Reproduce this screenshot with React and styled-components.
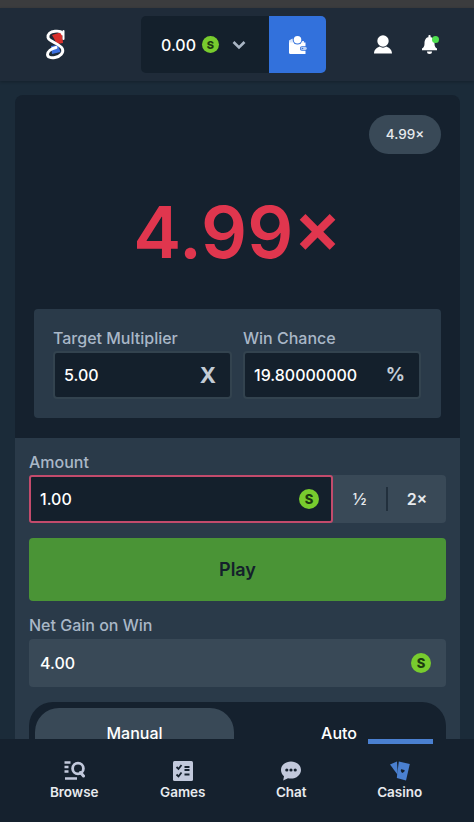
import React from "react";
import styled, { createGlobalStyle } from "styled-components";

const Global = createGlobalStyle`
  html, body { margin: 0; padding: 0; background: #1b2b39; }
  * { box-sizing: border-box; }
  body { font-family: Inter, "Open Sans", "Liberation Sans", sans-serif; overflow: hidden; }
`;

const Page = styled.div`
  position: relative;
  width: 474px;
  height: 822px;
  overflow: hidden;
  background: #1b2b39;
  display: flex;
  flex-direction: column;
`;
const BrowserStrip = styled.div`
  height: 8px;
  flex: none;
  background: #3b3c3e;
`;
const Header = styled.header`
  height: 73px;
  flex: none;
  background: #1f2b39;
  box-shadow: 0 1px 3px rgba(0,0,0,.25);
  display: flex;
  align-items: center;
  padding: 0 34px 0 43px;
`;
const Logo = styled.svg`
  width: 24px;
  height: 34px;
  flex: none;
`;
const Wallet = styled.div`
  margin-left: 74px;
  width: 185px;
  height: 57px;
  display: flex;
  border-radius: 5px;
  overflow: hidden;
`;
const Balance = styled.div`
  width: 128px;
  background: #14202c;
  display: flex;
  align-items: center;
  padding-left: 20px;
  color: #fff;
  font-size: 16px;
  font-weight: 500;
`;
const Chevron = styled.svg`
  width: 16px;
  height: 16px;
  margin-left: 12px;
`;
const WalletButton = styled.div`
  flex: 1;
  background: #3271dc;
  display: flex;
  align-items: center;
  justify-content: center;
`;
const HeaderIcons = styled.div`
  margin-left: auto;
  display: flex;
  align-items: center;
  gap: 27px;
`;
const Main = styled.main`
  flex: 1;
  padding: 14px 14px 0 15px;
  display: flex;
  flex-direction: column;
`;
const Board = styled.section`
  height: 343px;
  flex: none;
  background: #15212e;
  border-radius: 8px 8px 0 0;
  padding: 20px 19px 20px 19px;
  display: flex;
  flex-direction: column;
`;
const Pill = styled.div`
  align-self: flex-end;
  width: 72px;
  height: 39px;
  border-radius: 20px;
  background: #394957;
  color: #e6e9ed;
  font-size: 13.5px;
  font-weight: 500;
  display: flex;
  align-items: center;
  justify-content: center;
`;
const Result = styled.div`
  height: 155px;
  flex: none;
  color: #e0364e;
  font-size: 72px;
  font-weight: 600;
  display: flex;
  align-items: center;
  justify-content: center;
`;
const SettingsCard = styled.div`
  height: 110px;
  background: #2a3a49;
  border-radius: 4px;
  padding: 20px 20px 0 19px;
  display: grid;
  grid-template-columns: 179px 178px;
  column-gap: 11px;
  align-items: start;
`;
const Field = styled.div`
  display: flex;
  flex-direction: column;
`;
const Label = styled.label`
  color: #a9b7c7;
  font-size: 16px;
  font-weight: 500;
  line-height: 19px;
  margin-bottom: ${p => p.$gap ?? 3}px;
`;
const DarkInput = styled.div`
  height: 48px;
  background: #14202c;
  border: 2px solid #33434f;
  border-radius: 4px;
  display: flex;
  align-items: center;
  justify-content: space-between;
  padding: 0 14px 0 9px;
  color: #fff;
  font-size: 16px;
  font-weight: 500;
`;
const Suffix = styled.span`
  color: #c3ccd6;
  font-size: ${p => p.$size ?? 22}px;
  font-weight: 700;
`;
const Controls = styled.section`
  flex: 1;
  background: #2a3a49;
  padding: 15px 14px 0 14px;
  display: flex;
  flex-direction: column;
`;
const AmountRow = styled.div`
  display: flex;
  height: 48px;
  background: #394957;
  border-radius: 4px;
`;
const AmountInput = styled.div`
  width: 304px;
  flex: none;
  background: #14202c;
  border: 2px solid #c34b6c;
  border-radius: 3px;
  display: flex;
  align-items: center;
  justify-content: space-between;
  padding: 0 12px 0 9px;
  color: #fff;
  font-size: 16px;
  font-weight: 500;
`;
const HalfDouble = styled.div`
  flex: 1;
  display: flex;
  align-items: center;
  color: #e6e9ed;
`;
const MiniHalf = styled.div`
  width: 53px;
  text-align: center;
  font-size: 16px;
  font-weight: 500;
`;
const MiniDouble = styled.div`
  flex: 1;
  text-align: center;
  font-size: 16px;
  font-weight: 600;
`;
const Divider = styled.div`
  width: 2px;
  height: 24px;
  background: #22303d;
`;
const PlayButton = styled.div`
  height: 63px;
  margin-top: 15px;
  background: #4a9436;
  border-radius: 4px;
  display: flex;
  align-items: center;
  justify-content: center;
  color: #14202c;
  font-size: 18px;
  font-weight: 600;
`;
const GainField = styled(Field)`
  margin-top: 15px;
`;
const GainInput = styled.div`
  height: 48px;
  background: #394957;
  border-radius: 4px;
  display: flex;
  align-items: center;
  justify-content: space-between;
  padding: 0 15px 0 11px;
  color: #fff;
  font-size: 16px;
  font-weight: 500;
`;
const Tabs = styled.div`
  height: 70px;
  margin-top: 15px;
  background: #15212e;
  border-radius: 24px 24px 0 0;
  padding: 6px;
  display: grid;
  grid-template-columns: 199px 1fr;
  column-gap: 4px;
`;
const Tab = styled.div`
  background: ${p => (p.$active ? "#394957" : "transparent")};
  border-radius: 24px 24px 0 0;
  color: #fff;
  font-size: 16px;
  font-weight: 500;
  text-align: center;
  padding-top: 15px;
`;
const Nav = styled.nav`
  position: absolute;
  left: 0;
  right: 0;
  bottom: 0;
  height: 83px;
  background: #15212e;
  display: grid;
  grid-template-columns: repeat(4, 1fr);
  padding: 0 20px;
`;
const NavItem = styled.div`
  position: relative;
  display: flex;
  flex-direction: column;
  align-items: center;
  padding-top: 21px;
  color: #e8ebef;
  font-size: 13.5px;
  font-weight: 600;
  line-height: 17px;
`;
const NavIcon = styled.svg`
  width: 22px;
  height: 22px;
  margin-bottom: 2px;
`;
const ActiveBar = styled.div`
  position: absolute;
  top: 0;
  left: 50%;
  margin-left: -32px;
  width: 65px;
  height: 5px;
  background: #4a80d0;
`;
const CoinBadge = styled.span`
  width: ${p => p.$size ?? 20}px;
  height: ${p => p.$size ?? 20}px;
  border-radius: 50%;
  background: #78cc2e;
  color: #1c3a10;
  display: inline-flex;
  align-items: center;
  justify-content: center;
  font-size: ${p => (p.$size ? 11 : 13)}px;
  font-weight: 800;
  flex: none;
`;
const BalanceValue = styled.span`
  margin-right: 6px;
`;
const SoloIcon = styled.svg`
  display: block;
`;
const BellWrap = styled.div`
  position: relative;
  width: 20px;
  height: 22px;
`;
const GreenDot = styled.span`
  position: absolute;
  top: 2px;
  right: 1px;
  width: 7px;
  height: 7px;
  background: #4fe04f;
  border-radius: 50%;
`;

export default function App() {
  return (
    <Page>
      <Global />
      <BrowserStrip />
      <Header>
        <Logo viewBox="0 0 24 34">
          <path d="M9 7 L19 4 L20 15 L14 16Z" fill="#d8302c" />
          <path d="M8 18 L15 17 L17.5 24 L9 26Z" fill="#3c70e0" />
          <path d="M19.5 6C19.5 3.6 16.5 2.8 12 3.2 7 3.7 4.5 6 5 9.5c.5 4 12.5 6.5 14.5 11.5 1.3 3.6-2 7.6-7.5 8.5-4.5.7-7.5-.4-7.5-3 0-3 3.5-6 8.5-7" fill="none" stroke="#fff" strokeWidth="2.9" strokeLinecap="round" />
          <path d="M20.5 3v8" stroke="#fff" strokeWidth="2" strokeLinecap="round" />
        </Logo>
        <Wallet>
          <Balance>
            <BalanceValue>0.00</BalanceValue>
            <CoinBadge $size={17}>S</CoinBadge>
            <Chevron viewBox="0 0 16 16">
              <path d="M2.5 5 L8 10.5 L13.5 5" fill="none" stroke="#a9b5c4" strokeWidth="2.6" />
            </Chevron>
          </Balance>
          <WalletButton>
            <SoloIcon width="20" height="20" viewBox="0 0 20 20">
              <path d="M1 5.5 L4.5 3.6 L5.5 6 H16 V8 H1Z" fill="#dbe7fb" />
              <path d="M1 7.5 H17.5 V19 H2.5 A1.5 1.5 0 0 1 1 17.5Z" fill="#fff" />
              <circle cx="9.5" cy="4.8" r="4.8" fill="#3271dc" />
              <circle cx="9.5" cy="4.8" r="3.8" fill="#fff" />
              <rect x="12" y="11.2" width="7.5" height="4.6" rx="1.8" fill="#3271dc" />
              <rect x="12.8" y="12" width="6" height="3" rx="1.4" fill="#b9d0f5" />
              <circle cx="14.5" cy="13.5" r="0.8" fill="#3271dc" />
            </SoloIcon>
          </WalletButton>
        </Wallet>
        <HeaderIcons>
          <SoloIcon width="20" height="20" viewBox="0 0 20 20">
            <circle cx="10" cy="6" r="5.7" fill="#fff" />
            <path d="M1 18.5 C1 14 5 12 7 11.5 C8 13 12 13 13 11.5 C15 12 19 14 19 18.5Z" fill="#fff" />
          </SoloIcon>
          <BellWrap>
            <SoloIcon width="20" height="22" viewBox="0 0 20 22">
              <path d="M9.5 3 C5.5 3 4.5 6.5 4.5 9.5 C4.5 12 3.8 13.5 2 14.5 V16.3 H17 V14.5 C15.2 13.5 14.5 12 14.5 9.5 C14.5 6.5 13.5 3 9.5 3Z" fill="#fff" />
              <path d="M7 17.5 H12 A2.5 2.5 0 0 1 7 17.5Z" fill="#fff" />
              <rect x="8.4" y="1" width="2.2" height="3" rx="1" fill="#fff" />
            </SoloIcon>
            <GreenDot />
          </BellWrap>
        </HeaderIcons>
      </Header>
      <Main>
        <Board>
          <Pill>4.99×</Pill>
          <Result>4.99×</Result>
          <SettingsCard>
            <Field>
              <Label>Target Multiplier</Label>
              <DarkInput>
                5.00
                <Suffix>X</Suffix>
              </DarkInput>
            </Field>
            <Field>
              <Label>Win Chance</Label>
              <DarkInput>
                19.80000000
                <Suffix $size={19}>%</Suffix>
              </DarkInput>
            </Field>
          </SettingsCard>
        </Board>
        <Controls>
          <Label $gap={3}>Amount</Label>
          <AmountRow>
            <AmountInput>
              1.00
              <CoinBadge>S</CoinBadge>
            </AmountInput>
            <HalfDouble>
              <MiniHalf>½</MiniHalf>
              <Divider />
              <MiniDouble>2×</MiniDouble>
            </HalfDouble>
          </AmountRow>
          <PlayButton>Play</PlayButton>
          <GainField>
            <Label $gap={4}>Net Gain on Win</Label>
            <GainInput>
              4.00
              <CoinBadge>S</CoinBadge>
            </GainInput>
          </GainField>
          <Tabs>
            <Tab $active>Manual</Tab>
            <Tab>Auto</Tab>
          </Tabs>
        </Controls>
      </Main>
      <Nav>
        <NavItem>
          <NavIcon viewBox="0 0 22 22">
            <path d="M1.5 2.5h6M1.5 7h4M1.5 11.5h4M2 18.5h12" stroke="#c2c9dc" strokeWidth="2.6" fill="none" />
            <circle cx="15" cy="8.5" r="5.4" fill="none" stroke="#c2c9dc" strokeWidth="2.8" />
            <path d="M17.5 12.5 L20.5 16" stroke="#c2c9dc" strokeWidth="3" strokeLinecap="round" />
          </NavIcon>
          Browse
        </NavItem>
        <NavItem>
          <NavIcon viewBox="0 0 22 22">
            <rect x="1" y="1" width="20" height="20" rx="1.5" fill="#c2c9dc" />
            <path d="M4.5 7 L6.5 9 L9.5 5M4.5 14.5 L6.5 16.5 L9.5 12.5" stroke="#15212e" strokeWidth="1.8" fill="none" />
            <path d="M12.5 7h5M12.5 10h5M12.5 14.5h5" stroke="#15212e" strokeWidth="1.8" fill="none" />
          </NavIcon>
          Games
        </NavItem>
        <NavItem>
          <NavIcon viewBox="0 0 22 22">
            <path d="M11 1.5C5.5 1.5 1 5.2 1 10c0 2.5 1.2 4.6 3 6.2L3.2 20.5 8 18.2c1 .3 2 .4 3 .4 5.5 0 10-3.8 10-8.6S16.5 1.5 11 1.5Z" fill="#c2c9dc" />
            <circle cx="6.8" cy="10" r="1.6" fill="#15212e" />
            <circle cx="11" cy="10" r="1.6" fill="#15212e" />
            <circle cx="15.2" cy="10" r="1.6" fill="#15212e" />
          </NavIcon>
          Chat
        </NavItem>
        <NavItem>
          <ActiveBar />
          <NavIcon viewBox="0 0 22 22">
            <path d="M1 4.5 L8 1.5 L8.8 15 Z" fill="#4a80d0" />
            <path d="M9.8 1.5 L20.8 4 L17 20.5 L7.8 18 Z" fill="#4a80d0" />
            <path d="M12 9.5 c1-.8 1.8 0 2 .6 c.5-.5 1.5-.4 1.7.5 c.1 .9-1 1.8-2.6 2.4 c-1-1.2-1.7-2.6-1.1-3.5Z" fill="#15212e" />
          </NavIcon>
          Casino
        </NavItem>
      </Nav>
    </Page>
  );
}
